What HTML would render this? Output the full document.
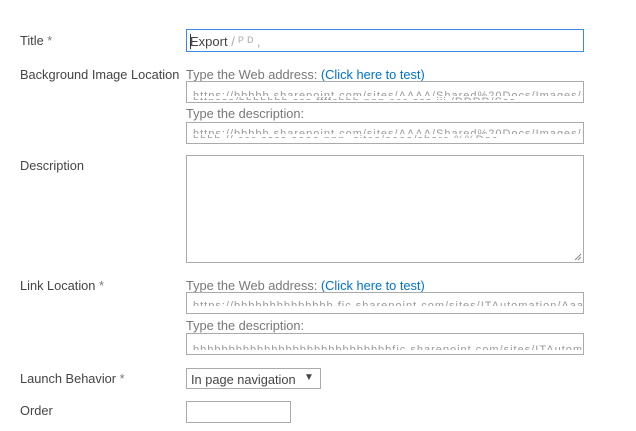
<!DOCTYPE html>
<html><head><style>
body{margin:0;width:636px;height:431px;background:#fff;font-family:"Liberation Sans",sans-serif;font-size:12.8px;color:#444;position:relative;overflow:hidden}
.a{position:absolute}
.lbl{left:20px;color:#444}
.req{color:#777}
.box{position:absolute;border:1px solid #ababab;background:#fff;box-sizing:border-box;overflow:hidden}
.hint{position:absolute;left:186px;color:#777}
.hint span{color:#0072c6}
.blur{position:absolute;left:6px;white-space:nowrap;color:#999;font-size:11px;letter-spacing:1px;height:6px;overflow:hidden}
</style></head><body>
<div class="a lbl" style="top:33px">Title <span class="req">*</span></div>
<div class="box" style="left:186px;top:29px;width:398px;height:23px;border:1px solid #3b8ce0;"><div class="a" style="left:3px;top:4px;color:#444;font-size:13px">Export <span style="color:#aaa">/ ᴾ ᴰ ,</span></div><div class="a" style="left:3px;top:4px;width:1px;height:15px;background:#333"></div></div>
<div class="a lbl" style="top:67px">Background Image Location</div>
<div class="hint" style="top:67px">Type the Web address: <span>(Click here to test)</span></div>
<div class="box" style="left:186px;top:81px;width:398px;height:22px"><div class="blur" style="top:8px">https://bbbbb.sharepoint.com/sites/AAAA/Shared%20Docs/Images/abcdefg</div><div class="blur" style="top:14px;height:4px">httpsss/bbbbbbb  sss  ffffchhh  ppp   ccc  sss  iii  /DDDD/Sss</div></div>
<div class="hint" style="top:106px">Type the description:</div>
<div class="box" style="left:186px;top:122px;width:398px;height:22px"><div class="blur" style="top:5px">https://bbbbb.sharepoint.com/sites/AAAA/Shared%20Docs/Images/abcdefg</div><div class="blur" style="top:11px;height:4px">hhhh  //   ccc   ssss  aaaa   ppp   ,sites/aaaa/share  %%Doc</div></div>
<div class="a lbl" style="top:158px">Description</div>
<div class="box" style="left:186px;top:155px;width:398px;height:108px"><svg class="a" style="right:1px;bottom:1px" width="8" height="8"><path d="M7 1L1 7M7 4L4 7" stroke="#888" stroke-width="1"/></svg></div>
<div class="a lbl" style="top:278px">Link Location <span class="req">*</span></div>
<div class="hint" style="top:278px">Type the Web address: <span>(Click here to test)</span></div>
<div class="box" style="left:186px;top:292px;width:398px;height:22px"><div class="blur" style="top:7px">https://bbbbbbbbbbbbbb fic sharepoint com/sites/ITAutomation/Aaaaaaa</div></div>
<div class="hint" style="top:318px">Type the description:</div>
<div class="box" style="left:186px;top:333px;width:398px;height:22px"><div class="blur" style="top:10px">bbbbbbbbbbbbbbbbbbbbbbbbbbbbfic sharepoint com/sites/ITAutomation/Aaaa</div></div>
<div class="a lbl" style="top:371px">Launch Behavior <span class="req">*</span></div>
<div class="box" style="left:186px;top:368px;width:135px;height:21px;border-color:#ababab"><div class="a" style="left:4px;top:3px;color:#444;font-size:12.8px">In page navigation</div><div class="a" style="left:117px;top:3px;font-size:10px;color:#444">▼</div></div>
<div class="a lbl" style="top:403px">Order</div>
<div class="box" style="left:186px;top:401px;width:105px;height:22px"></div>
</body></html>
